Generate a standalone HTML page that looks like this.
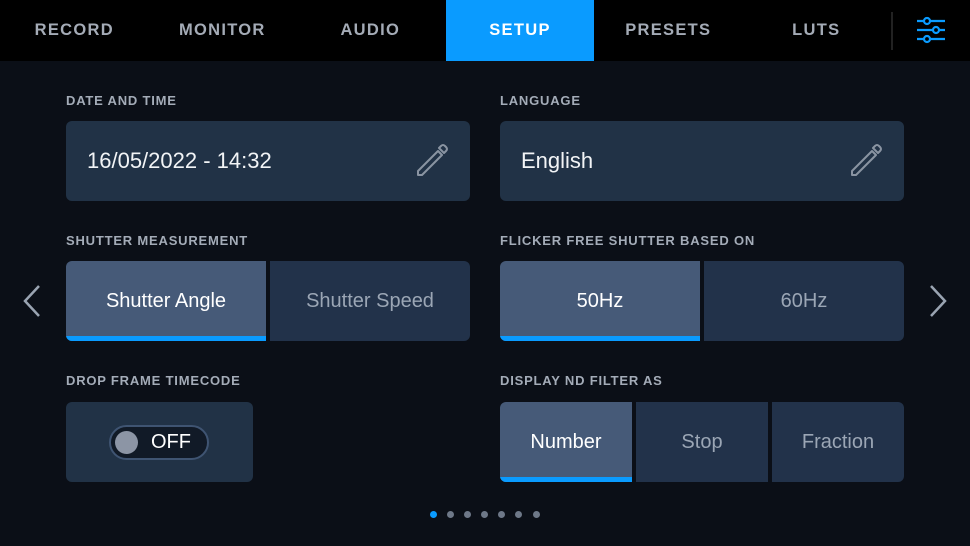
<!DOCTYPE html><html><head><style>
*{margin:0;padding:0;box-sizing:border-box}
body{width:970px;height:546px;background:#0b0f17;font-family:"Liberation Sans",sans-serif;position:relative;overflow:hidden}
.top{position:absolute;left:0;top:0;width:970px;height:61px;background:#000}
.tab{position:absolute;top:0;height:61px;width:148.6px;line-height:61px;text-align:center;color:#a4abb6;font-size:16.5px;font-weight:bold;letter-spacing:1.3px}
.tab.on{background:#0a9bff;color:#fff}
.lbl{position:absolute;color:#a4acb8;font-size:13px;font-weight:bold;letter-spacing:.8px}
.box{position:absolute;background:#213246;border-radius:6px}
.val{position:absolute;color:#f2f4f6;font-size:22px}
.seg{position:absolute;background:#22324a;color:#9ba6b5;font-size:20px;text-align:center;line-height:80px;overflow:hidden}
.seg.on{background:#465a78;color:#fff}
.seg.on::after{content:"";position:absolute;left:0;right:0;bottom:0;height:5px;background:#0a9bff}
.dot{position:absolute;top:511px;width:7px;height:7px;border-radius:50%;background:#6e7888}
</style></head><body>
<div class="top"></div>
<div class="tab" style="left:0">RECORD</div>
<div class="tab" style="left:148px">MONITOR</div>
<div class="tab" style="left:296px">AUDIO</div>
<div class="tab on" style="left:446px;width:148px">SETUP</div>
<div class="tab" style="left:594px">PRESETS</div>
<div class="tab" style="left:742px">LUTS</div>
<div style="position:absolute;left:891px;top:12px;width:2px;height:38px;background:#222"></div>
<svg style="position:absolute;left:915px;top:15px" width="32" height="30" viewBox="0 0 32 30" fill="none" stroke="#0a9bff" stroke-width="2.2">
<path d="M2 6H9M15 6H30M2 15H18M24 15H30M2 24H9M15 24H30"/><circle cx="12" cy="6" r="3"/><circle cx="21" cy="15" r="3"/><circle cx="12" cy="24" r="3"/></svg>

<div class="lbl" style="left:66px;top:93px">DATE AND TIME</div>
<div class="box" style="left:66px;top:121px;width:404px;height:80px"></div>
<div class="val" style="left:87px;top:148px">16/05/2022 - 14:32</div>
<svg style="position:absolute;left:414px;top:143px" width="36" height="36" viewBox="0 0 36 36" fill="none" stroke="#8a94a2" stroke-width="2" stroke-linejoin="round"><path d="M4 28L24 8L28 12L8 32H4Z M25 5L27 3Q29 1 31 3L32 4Q34 6 32 8L30 10Z"/></svg>
<div class="lbl" style="left:500px;top:93px">LANGUAGE</div>
<div class="box" style="left:500px;top:121px;width:404px;height:80px"></div>
<div class="val" style="left:521px;top:148px">English</div>
<svg style="position:absolute;left:848px;top:143px" width="36" height="36" viewBox="0 0 36 36" fill="none" stroke="#8a94a2" stroke-width="2" stroke-linejoin="round"><path d="M4 28L24 8L28 12L8 32H4Z M25 5L27 3Q29 1 31 3L32 4Q34 6 32 8L30 10Z"/></svg>

<div class="lbl" style="left:66px;top:233px">SHUTTER MEASUREMENT</div>
<div class="seg on" style="left:66px;top:261px;width:200px;height:80px;border-radius:6px 0 0 6px">Shutter Angle</div>
<div class="seg" style="left:270px;top:261px;width:200px;height:80px;border-radius:0 6px 6px 0">Shutter Speed</div>
<div class="lbl" style="left:500px;top:233px">FLICKER FREE SHUTTER BASED ON</div>
<div class="seg on" style="left:500px;top:261px;width:200px;height:80px;border-radius:6px 0 0 6px">50Hz</div>
<div class="seg" style="left:704px;top:261px;width:200px;height:80px;border-radius:0 6px 6px 0">60Hz</div>
<svg style="position:absolute;left:22px;top:284px" width="20" height="34" fill="none" stroke="#9aa4b2" stroke-width="2.5"><path d="M17 2L3 17L17 32"/></svg>
<svg style="position:absolute;left:928px;top:284px" width="20" height="34" fill="none" stroke="#9aa4b2" stroke-width="2.5"><path d="M3 2L17 17L3 32"/></svg>

<div class="lbl" style="left:66px;top:373px">DROP FRAME TIMECODE</div>
<div class="box" style="left:66px;top:402px;width:187px;height:80px"></div>
<div style="position:absolute;left:109px;top:425px;width:100px;height:35px;border-radius:18px;background:#111a27;border:2px solid #3f5472"></div>
<div style="position:absolute;left:115px;top:431px;width:23px;height:23px;border-radius:50%;background:#8c95a5"></div>
<div style="position:absolute;left:151px;top:431px;color:#fff;font-size:20px">OFF</div>
<div class="lbl" style="left:500px;top:373px">DISPLAY ND FILTER AS</div>
<div class="seg on" style="left:500px;top:402px;width:132px;height:80px;border-radius:6px 0 0 6px">Number</div>
<div class="seg" style="left:636px;top:402px;width:132px;height:80px">Stop</div>
<div class="seg" style="left:772px;top:402px;width:132px;height:80px;border-radius:0 6px 6px 0">Fraction</div>

<div class="dot" style="left:430px;background:#0a9bff"></div>
<div class="dot" style="left:447px"></div><div class="dot" style="left:464px"></div><div class="dot" style="left:481px"></div><div class="dot" style="left:498px"></div><div class="dot" style="left:515px"></div><div class="dot" style="left:533px"></div>
</body></html>
